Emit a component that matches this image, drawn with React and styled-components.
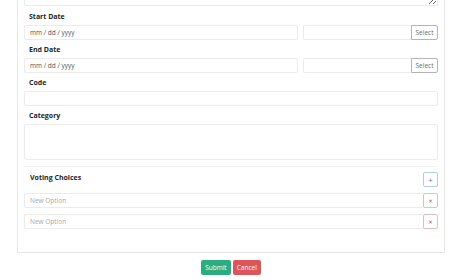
import styled, { createGlobalStyle } from "styled-components";

const GlobalStyle = createGlobalStyle`
  html, body {
    margin: 0;
    padding: 0;
    background: #ffffff;
    font-family: "Open Sans", "Liberation Sans", sans-serif;
    color: #212529;
    overflow: hidden;
  }
  * {
    box-sizing: border-box;
  }
`;

const Page = styled.div`
  width: 428px;
  margin-left: 17px;
`;

const Card = styled.form`
  margin-top: -30px;
  border: 1px solid #e6e6e6;
  border-top: none;
  padding: 0 6px 23px;
  display: flex;
  flex-direction: column;
`;

const Group = styled.div`
  display: flex;
  flex-direction: column;
  margin-top: ${(p) => p.$top || 5}px;
`;

const Label = styled.label`
  font-size: 7px;
  font-weight: 700;
  line-height: 9px;
  height: 9px;
  margin-bottom: 4px;
  padding-left: 5px;
`;

const Field = styled.input`
  height: 15px;
  width: 100%;
  border: 1px solid #ebebeb;
  border-radius: 2px;
  padding: 0 5px;
  font-family: inherit;
  font-size: 6.5px;
  color: #4a4a4a;
  background: #fff;
  outline: none;

  &::placeholder {
    color: ${(p) => (p.$dim ? "#a8a8a8" : "#505050")};
    opacity: 1;
  }
`;

const Area = styled.textarea`
  display: block;
  width: 100%;
  height: ${(p) => p.$h}px;
  border: 1px solid #ebebeb;
  border-radius: 2px;
  font-family: inherit;
  font-size: 7px;
  resize: ${(p) => (p.$resize ? "vertical" : "none")};
  outline: none;
`;

const DateRow = styled.div`
  display: grid;
  grid-template-columns: 274px 1fr;
  gap: 5px;
`;

const InputGroup = styled.div`
  display: flex;
  height: 15px;
`;

const GroupField = styled(Field)`
  flex: 1;
  border-right: none;
  border-radius: 2px 0 0 2px;
`;

const SelectButton = styled.button`
  width: 27px;
  height: 15px;
  border: 1px solid #b4b4b4;
  border-radius: 0 2px 2px 0;
  background: #fff;
  color: #6c6c6c;
  font-family: inherit;
  font-size: 6.5px;
  padding: 0;
`;

const Divider = styled.hr`
  border: none;
  border-top: 1px solid #f0f0f0;
  margin: 6px 0 0;
`;

const ChoicesHeader = styled.div`
  display: flex;
  justify-content: space-between;
  align-items: flex-start;
  margin-top: 5px;
`;

const ChoicesTitle = styled.span`
  font-size: 7px;
  font-weight: 700;
  line-height: 9px;
  margin-top: 1px;
  padding-left: 6px;
`;

const IconButton = styled.button`
  width: 15px;
  height: 15px;
  padding: 0;
  border: 1px solid ${(p) => (p.$danger ? "#e6bcbc" : "#b6c9de")};
  border-radius: 2px;
  background: #fff;
  color: ${(p) => (p.$danger ? "#b04a4a" : "#5a6f8c")};
  font-family: "DejaVu Sans", sans-serif;
  font-size: 6px;
  line-height: 13px;
  display: flex;
  align-items: center;
  justify-content: center;
`;

const OptionList = styled.div`
  display: flex;
  flex-direction: column;
  gap: 6px;
  margin-top: 6px;
`;

const OptionRow = styled.div`
  display: flex;
  height: 15px;
`;

const OptionField = styled(Field)`
  flex: 1;
  border-right: none;
  border-radius: 2px 0 0 2px;
`;

const Actions = styled.div`
  display: flex;
  justify-content: center;
  gap: 2px;
  margin-top: 7px;
`;

const ActionButton = styled.button`
  height: 15px;
  padding: 0 4px;
  border: none;
  border-radius: 2px;
  background: ${(p) => (p.$variant === "cancel" ? "#dc5558" : "#2aad80")};
  color: #fff;
  font-family: inherit;
  font-size: 6.5px;
`;

const options = ["New Option", "New Option"];

export default function App() {
  return (
    <>
      <GlobalStyle />
      <Page>
        <Card onSubmit={(e) => e.preventDefault()}>
          <Area $h={36} $resize />

          <Group $top={6}>
            <Label>Start Date</Label>
            <DateRow>
              <Field placeholder="mm / dd / yyyy" />
              <InputGroup>
                <GroupField />
                <SelectButton type="button">Select</SelectButton>
              </InputGroup>
            </DateRow>
          </Group>

          <Group>
            <Label>End Date</Label>
            <DateRow>
              <Field placeholder="mm / dd / yyyy" />
              <InputGroup>
                <GroupField />
                <SelectButton type="button">Select</SelectButton>
              </InputGroup>
            </DateRow>
          </Group>

          <Group>
            <Label>Code</Label>
            <Field />
          </Group>

          <Group>
            <Label>Category</Label>
            <Area $h={36} />
          </Group>

          <Divider />

          <ChoicesHeader>
            <ChoicesTitle>Voting Choices</ChoicesTitle>
            <IconButton type="button">+</IconButton>
          </ChoicesHeader>

          <OptionList>
            {options.map((o, i) => (
              <OptionRow key={i}>
                <OptionField placeholder={o} $dim />
                <IconButton type="button" $danger>
                  ×
                </IconButton>
              </OptionRow>
            ))}
          </OptionList>
        </Card>

        <Actions>
          <ActionButton type="submit">Submit</ActionButton>
          <ActionButton type="button" $variant="cancel">
            Cancel
          </ActionButton>
        </Actions>
      </Page>
    </>
  );
}
